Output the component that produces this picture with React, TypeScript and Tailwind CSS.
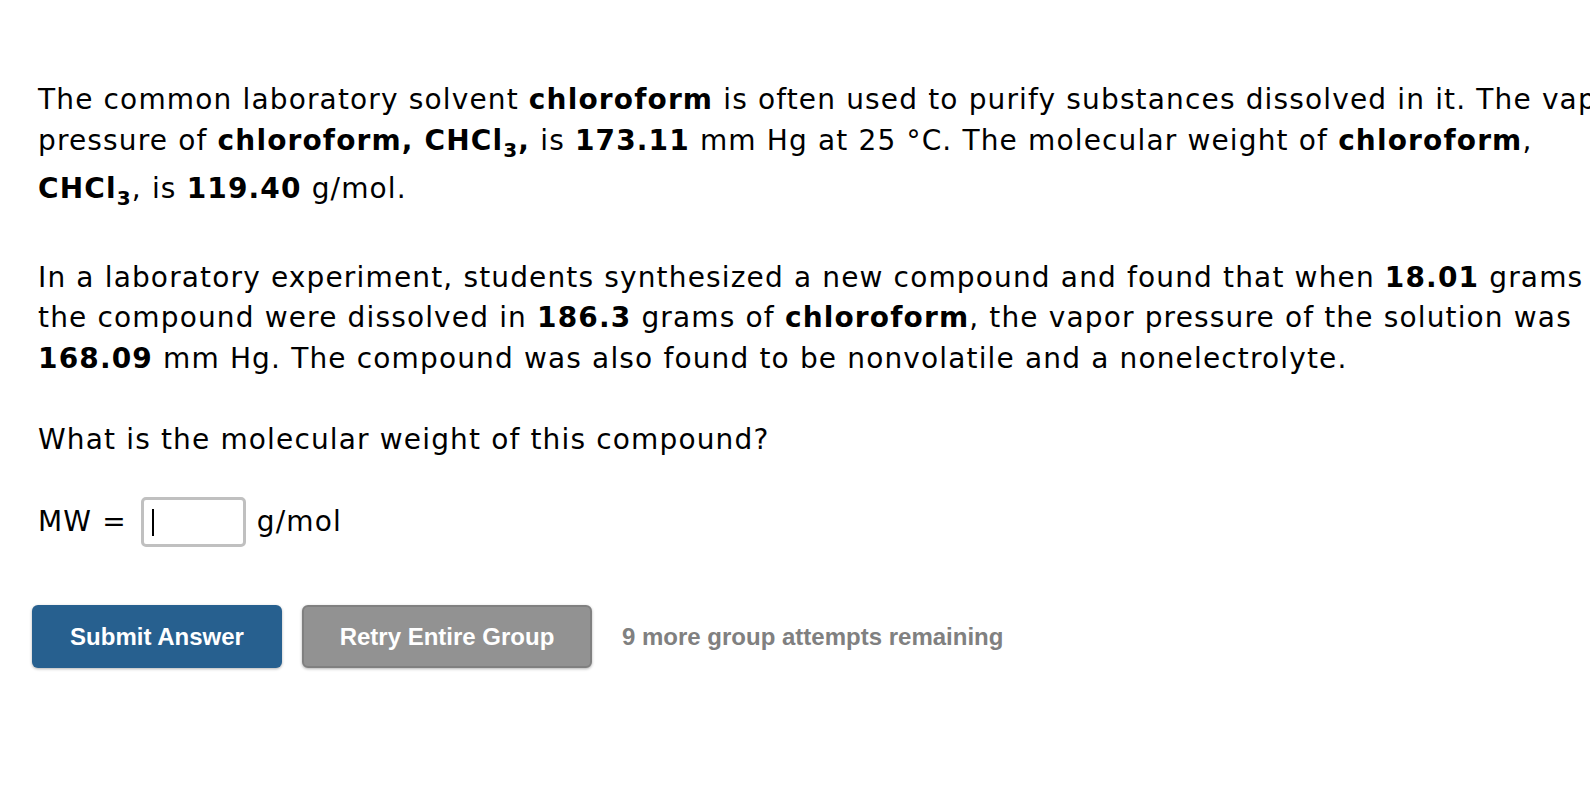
export default function App() {
  const body =
    "font-['Verdana','DejaVu_Sans',sans-serif] text-[28px] leading-[40.6px] tracking-[1.15px] text-black";
  const sub = "relative top-[7px] align-baseline text-[20px] leading-none";
  return (
    <div className="h-[810px] w-full overflow-hidden bg-white">
      <div className={`w-[2200px] pl-[38px] pt-[80px] ${body}`}>
        <div className="whitespace-nowrap">
          <div>
            The common laboratory solvent <b>chloroform</b> is often used to purify substances dissolved in it. The vapor
          </div>
          <div>
            pressure of{" "}
            <b>
              chloroform, CHCl<span className={sub}>3</span>,
            </b>{" "}
            is <b>173.11</b> mm Hg at 25 °C. The molecular weight of <b>chloroform</b>,
          </div>
          <div className="mt-[8px]">
            <b>
              CHCl<span className={sub}>3</span>
            </b>
            , is <b>119.40</b> g/mol.
          </div>
        </div>

        <div className="mt-[48px] whitespace-nowrap">
          <div>
            In a laboratory experiment, students synthesized a new compound and found that when <b>18.01</b> grams of
          </div>
          <div>
            the compound were dissolved in <b>186.3</b> grams of <b>chloroform</b>, the vapor pressure of the solution was
          </div>
          <div>
            <b>168.09</b> mm Hg. The compound was also found to be nonvolatile and a nonelectrolyte.
          </div>
        </div>

        <p className="mt-[40px]">What is the molecular weight of this compound?</p>

        <div className="mt-[37px] flex h-[50px] items-center">
          <span>MW =</span>
          <div className="ml-[14px] flex h-[50px] w-[105px] items-center rounded-[5px] border-[3px] border-[#c0c0c0] bg-white pl-[8px]">
            <span className="h-[27px] w-[2px] bg-black" />
          </div>
          <span className="ml-[11px]">g/mol</span>
        </div>
      </div>

      <div className="mt-[58px] flex items-center pl-[32px] font-['Arial','Liberation_Sans',sans-serif] text-[24px] font-bold">
        <button
          type="button"
          className="h-[63px] w-[250px] rounded-[6px] bg-[#27608f] text-white shadow-[0_1px_3px_rgba(0,0,0,0.3)]"
        >
          Submit Answer
        </button>
        <button
          type="button"
          className="ml-[20px] h-[63px] w-[290px] rounded-[6px] border-2 border-[#808080] bg-[#929292] text-white shadow-[0_1px_3px_rgba(0,0,0,0.3)]"
        >
          Retry Entire Group
        </button>
        <span className="ml-[30px] text-[#808080]">9 more group attempts remaining</span>
      </div>
    </div>
  );
}
